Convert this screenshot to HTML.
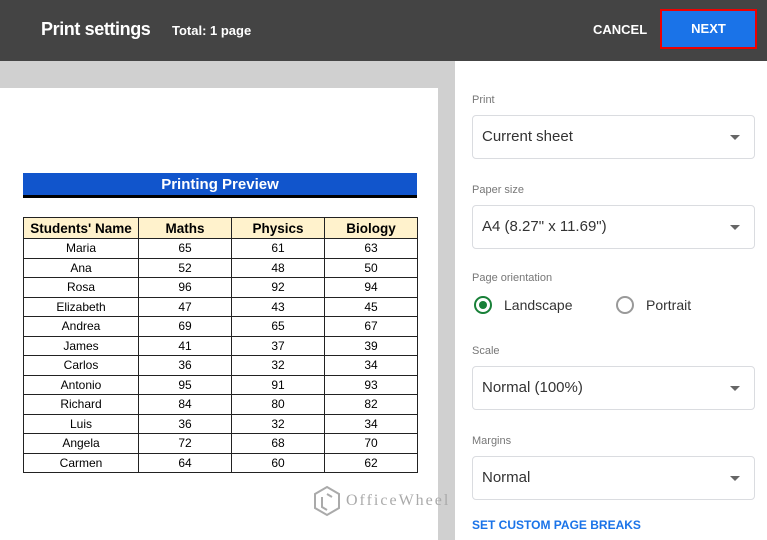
<!DOCTYPE html><html><head><style>
body{margin:0;width:767px;height:540px;overflow:hidden;position:relative;font-family:"Liberation Sans",sans-serif;background:#fff}
.hdr{position:absolute;left:0;top:0;width:767px;height:61px;background:#444}
.abs{position:absolute}
.lbl{position:absolute;left:472px;font-size:11px;color:#777}
.box{position:absolute;left:472px;width:281px;height:42px;border:1px solid #dadce0;border-radius:4px;font-size:15px;color:#333;line-height:42px;text-indent:9px}
.box:after{content:"";position:absolute;right:14px;top:19px;border:5px solid transparent;border-top:5px solid #666}
table{position:absolute;left:23px;top:217px;border-collapse:collapse;font-size:12px}
td{border:1px solid #222;text-align:center;height:18.5px;padding:0;line-height:18px}
th{border:1px solid #222;background:#fff2cc;font-size:13.5px;height:20px;padding:0}
</style></head><body>
<div class="hdr"></div>
<div class="abs" style="left:41px;top:19px;color:#fff;font-size:18px;font-weight:bold;letter-spacing:-0.4px">Print settings</div>
<div class="abs" style="left:172px;top:23px;color:#fff;font-size:13px;font-weight:bold">Total: 1 page</div>
<div class="abs" style="left:593px;top:22px;color:#fff;font-size:13px;font-weight:bold">CANCEL</div>
<div class="abs" style="left:660px;top:9px;width:93px;height:36px;border:2px solid #e00;background:#1a73e8;color:#fff;font-size:13px;font-weight:bold;text-align:center;line-height:36px">NEXT</div>
<div class="abs" style="left:0;top:61px;width:455px;height:479px;background:#d0d0d0"></div>
<div class="abs" style="left:0;top:88px;width:438px;height:452px;background:#fff"></div>
<div class="abs" style="left:23px;top:173px;width:394px;height:22px;background:#1155cc;border-bottom:3px solid #000;color:#fff;font-weight:bold;font-size:15px;text-align:center;line-height:23px">Printing Preview</div>
<table>
<tr><th style="width:114px">Students' Name</th><th style="width:92px">Maths</th><th style="width:92px">Physics</th><th style="width:92px">Biology</th></tr>
<tr><td>Maria</td><td>65</td><td>61</td><td>63</td></tr>
<tr><td>Ana</td><td>52</td><td>48</td><td>50</td></tr>
<tr><td>Rosa</td><td>96</td><td>92</td><td>94</td></tr>
<tr><td>Elizabeth</td><td>47</td><td>43</td><td>45</td></tr>
<tr><td>Andrea</td><td>69</td><td>65</td><td>67</td></tr>
<tr><td>James</td><td>41</td><td>37</td><td>39</td></tr>
<tr><td>Carlos</td><td>36</td><td>32</td><td>34</td></tr>
<tr><td>Antonio</td><td>95</td><td>91</td><td>93</td></tr>
<tr><td>Richard</td><td>84</td><td>80</td><td>82</td></tr>
<tr><td>Luis</td><td>36</td><td>32</td><td>34</td></tr>
<tr><td>Angela</td><td>72</td><td>68</td><td>70</td></tr>
<tr><td>Carmen</td><td>64</td><td>60</td><td>62</td></tr>
</table>
<svg class="abs" style="left:312px;top:485px" width="30" height="32" viewBox="0 0 30 32"><path d="M15 2L27 9V23L15 30L3 23V9Z M10 12V22L15 25 M20 12L15 9" fill="none" stroke="#aaa" stroke-width="2"/></svg>
<div class="abs" style="left:346px;top:492px;font-family:'Liberation Serif',serif;font-size:16px;letter-spacing:2px;color:#aaa">OfficeWheel</div>
<div class="abs" style="left:455px;top:61px;width:312px;height:479px;background:#fff"></div>
<div class="lbl" style="top:94px">Print</div>
<div class="box" style="top:115px">Current sheet</div>
<div class="lbl" style="top:184px">Paper size</div>
<div class="box" style="top:205px">A4 (8.27" x 11.69")</div>
<div class="lbl" style="top:272px">Page orientation</div>
<div class="abs" style="left:474px;top:296px;width:14px;height:14px;border:2px solid #188038;border-radius:50%"></div>
<div class="abs" style="left:479px;top:301px;width:8px;height:8px;background:#188038;border-radius:50%"></div>
<div class="abs" style="left:504px;top:297px;font-size:14px;color:#333">Landscape</div>
<div class="abs" style="left:616px;top:296px;width:14px;height:14px;border:2px solid #999;border-radius:50%"></div>
<div class="abs" style="left:646px;top:297px;font-size:14px;color:#333">Portrait</div>
<div class="lbl" style="top:345px">Scale</div>
<div class="box" style="top:366px">Normal (100%)</div>
<div class="lbl" style="top:435px">Margins</div>
<div class="box" style="top:456px">Normal</div>
<div class="abs" style="left:472px;top:518px;font-size:12px;font-weight:bold;color:#1a73e8">SET CUSTOM PAGE BREAKS</div>
</body></html>
